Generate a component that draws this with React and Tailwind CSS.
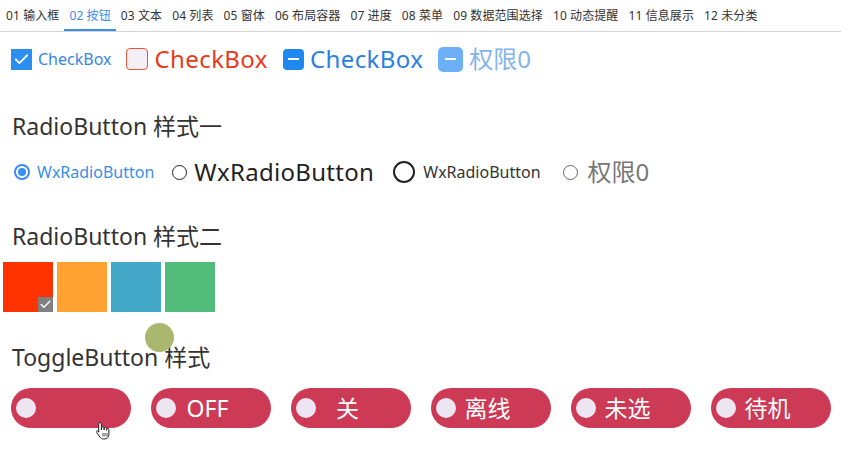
import { Check } from 'lucide-react'

const FONT = "font-['Noto_Sans','Noto_Sans_CJK_SC',sans-serif]"

const tabs = ['01 输入框','02 按钮','03 文本','04 列表','05 窗体','06 布局容器','07 进度','08 菜单','09 数据范围选择','10 动态提醒','11 信息展示','12 未分类']
const swatches = ['#ff3300','#ffa231','#44a8c8','#52bd7a']
const toggles = ['','OFF','关','离线','未选','待机']

function Minus() {
  return <span className="block w-[11px] h-[2px] bg-white" />
}

function HandCursor() {
  return (
    <svg width="16" height="20" viewBox="0 0 16 20" className="absolute left-[95px] top-[421px]">
      <path d="M5 1.5c.8 0 1.4.6 1.4 1.4V9l.1-2c0-.8.6-1.3 1.3-1.3s1.3.6 1.3 1.3v2l.1-1.3c0-.7.6-1.2 1.2-1.2s1.2.5 1.2 1.2v1.6l.1-.9c0-.6.5-1.1 1.1-1.1s1.1.5 1.1 1.1v5c0 2.6-1.9 4.6-4.6 4.6H8.6c-1.6 0-2.8-.7-3.7-2L1.7 11.6c-.4-.6-.2-1.4.4-1.7.5-.3 1.2-.2 1.6.3l-.1-.1.1 1.1V2.9c0-.8.6-1.4 1.3-1.4z" fill="#fff" stroke="#222" strokeWidth="1" strokeLinejoin="round" />
      <path d="M8 12v3.5M10 12v3.5M12 12v3.5" stroke="#222" strokeWidth="0.8" />
    </svg>
  )
}

export default function App() {
  return (
    <div className={`relative w-[841px] h-[450px] bg-white overflow-hidden ${FONT}`}>
      <div className="flex pl-[1px] border-b border-[#d4d4d4] h-[32px] items-end">
        {tabs.map((t, i) => (
          <div key={t} className={`px-[5px] h-[31px] flex items-center text-[12px] tracking-[0.1px] whitespace-nowrap ${i === 1 ? 'text-[#3a8ee6] border-b-2 border-[#3a8ee6] pt-[2px]' : 'text-[#333]'}`}>{t}</div>
        ))}
      </div>

      <div className="flex items-center h-[54px] pl-[11px]">
        <span className="w-[21px] h-[21px] bg-[#2b8ef0] flex items-center justify-center"><Check size={17} color="#fff" strokeWidth={2.5} /></span>
        <span className="ml-[6px] text-[16px] text-[#3a86e0]">CheckBox</span>
        <span className="ml-[15px] w-[22px] h-[22px] rounded-[4px] border border-[#e8553c] bg-[#f4eef5]" />
        <span className="ml-[6px] text-[24px] tracking-[0.4px] text-[#e83a1a]">CheckBox</span>
        <span className="ml-[15px] w-[21px] h-[21px] rounded-[4px] bg-[#1e88f0] flex items-center justify-center"><Minus /></span>
        <span className="ml-[6px] text-[24px] tracking-[0.4px] text-[#2c7fe0]">CheckBox</span>
        <span className="ml-[15px] w-[25px] h-[25px] rounded-[5px] bg-[#6db0f7] flex items-center justify-center"><Minus /></span>
        <span className="ml-[6px] text-[24px] text-[#82b4ee]">权限0</span>
      </div>

      <div className="pl-[12px] pt-[24px] text-[23px] leading-[32px] text-[#333]">RadioButton 样式一</div>

      <div className="flex items-center h-[36px] mt-[12px] pl-[14px]">
        <span className="w-[16px] h-[16px] rounded-full border-2 border-[#3b8cf0] flex items-center justify-center"><span className="w-[8px] h-[8px] rounded-full bg-[#3b8cf0]" /></span>
        <span className="ml-[7px] text-[16px] text-[#3a8ee6]">WxRadioButton</span>
        <span className="ml-[18px] w-[15px] h-[15px] rounded-full border-[1.5px] border-[#222]" />
        <span className="ml-[7px] text-[24px] tracking-[0.3px] text-[#222]">WxRadioButton</span>
        <span className="ml-[19px] w-[22px] h-[22px] rounded-full border-[2.5px] border-[#222]" />
        <span className="ml-[8px] text-[16px] text-[#333]">WxRadioButton</span>
        <span className="ml-[22px] w-[15px] h-[15px] rounded-full border-[1.5px] border-[#666]" />
        <span className="ml-[10px] text-[24px] text-[#777]">权限0</span>
      </div>

      <div className="pl-[12px] pt-[30px] text-[23px] leading-[32px] text-[#333]">RadioButton 样式二</div>

      <div className="flex gap-[4px] pl-[3px] mt-[10px]">
        {swatches.map((c, i) => (
          <div key={c} className="relative w-[50px] h-[50px]" style={{ background: c }}>
            {i === 0 && (
              <span className="absolute right-0 bottom-0 w-[15px] h-[15px] bg-[#808080] flex items-center justify-center"><Check size={13} color="#fff" strokeWidth={2.5} /></span>
            )}
          </div>
        ))}
      </div>

      <div className="pl-[12px] pt-[29px] text-[23px] leading-[32px] text-[#333]">ToggleButton 样式</div>

      <div className="flex gap-[20px] pl-[11px] mt-[15px]">
        {toggles.map((t, i) => (
          <div key={i} className="w-[120px] h-[40px] rounded-full bg-[#cc3a55] flex items-center pl-[5px] pr-[32px]">
            <span className="w-[20px] h-[20px] rounded-full bg-[#ede6f2] shrink-0" />
            <span className="flex-1 text-center text-[23px] leading-none text-white">{t}</span>
          </div>
        ))}
      </div>

      <span className="absolute left-[145px] top-[323px] w-[29px] h-[29px] rounded-full bg-[#a9b86e]" />
      <HandCursor />
    </div>
  )
}
